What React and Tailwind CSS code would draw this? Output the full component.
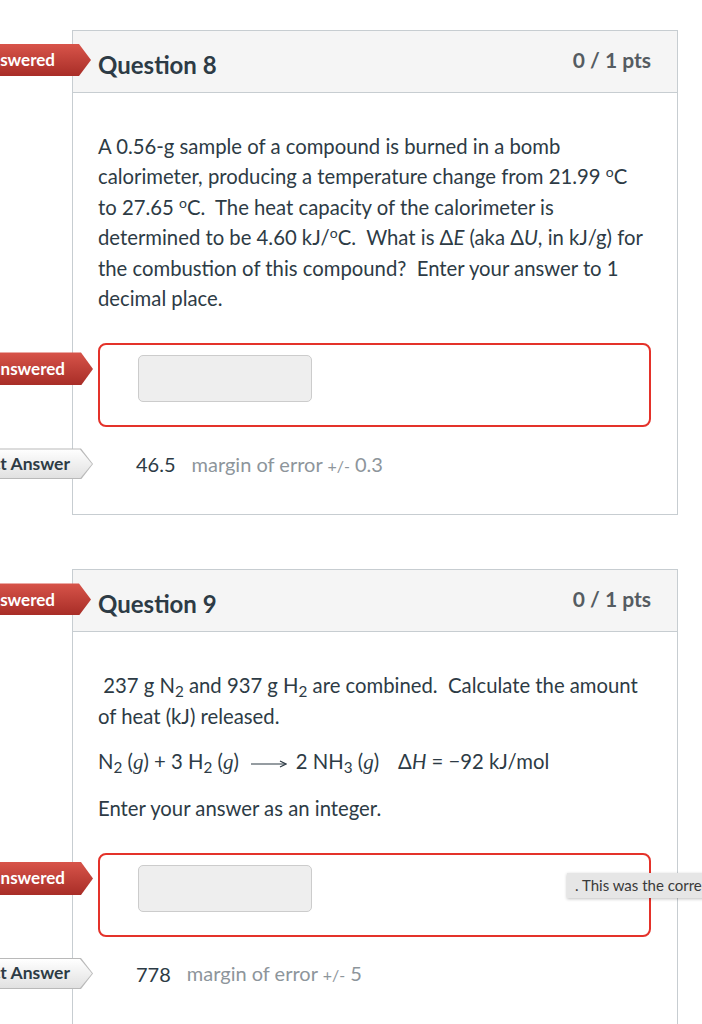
import React from 'react';

const arrowClip = '[clip-path:polygon(0_0,calc(100%_-_12px)_0,100%_50%,calc(100%_-_12px)_100%,0_100%)]';

// Red "Unanswered" flag, left part runs off the page
const RedTab = ({className}) => (
    <div className={`absolute w-[160px] flex items-center justify-end whitespace-nowrap bg-linear-to-b from-[#d8544a] to-[#a82d27] text-white font-bold text-[17px] ${arrowClip} ${className}`}>
        Unanswered
    </div>
);

// Light "Correct Answer" flag with a thin grey outline
const GreyTab = ({className}) => (
    <div className={`absolute w-[160px] bg-[#b9b9b9] ${arrowClip} ${className}`}>
        <div className={`absolute inset-[1px] flex items-center justify-end whitespace-nowrap pr-[22px] bg-linear-to-b from-white to-[#e1e1e1] text-[#2d3b45] font-bold text-[17.5px] ${arrowClip}`}>
            Correct Answer
        </div>
    </div>
);

const Header = ({title}) => (
    <div className="relative h-[62px] flex items-center justify-between pl-[25px] pr-[26px] bg-[#f5f5f5] border-b border-[#c7cdd1]">
        <RedTab className="left-[-142px] top-[13px] h-[32px] pr-[36px]"/>
        <h2 className="text-[24px] font-bold text-[#2d3b45] pt-[6px]">{title}</h2>
        <span className="text-[21px] font-bold text-[#555c62] -mt-[4px]">0 / 1 pts</span>
    </div>
);

const AnswerBox = ({tooltip}) => (
    <div className="relative mt-[30px] pl-[25px] pr-[26px]">
        <RedTab className="left-[-140px] top-[9px] h-[33px] pr-[28px]"/>
        <div className="h-[84px] border-2 border-[#e4322a] rounded-[8px] pl-[38px] pt-[10px]">
            <div className="w-[174px] h-[47px] bg-[#eeeeee] border border-[#cccccc] rounded-[5px]"/>
        </div>
        {tooltip && (
            <div className="absolute left-[494px] top-[20px] h-[25px] flex items-center pl-[8px] pr-3 bg-[#e6e6e6] shadow-[0_1px_3px_rgba(0,0,0,0.25)] text-[15px] text-[#3a3a3a] whitespace-nowrap">
                . This was the correct answer.
            </div>
        )}
    </div>
);

const CorrectRow = ({value, margin}) => (
    <div className="relative mt-[22px] h-[30px] flex items-center pl-[63px]">
        <GreyTab className="left-[-140px] top-[-1px] h-[31px]"/>
        <span className="text-[20px] text-[#2d3b45]">{value}</span>
        <span className="ml-[16px] text-[20px] text-[#8d959b]">
            margin of error <span className="text-[16px]">+/-</span> {margin}
        </span>
    </div>
);

const g = <i className="font-['Liberation_Serif'] text-[21px]">g</i>;
const deg = <sup className="text-[14px]">o</sup>;

const LongArrow = () => (
    <svg className="inline-block ml-[12px] mr-[9px] align-middle" width="36" height="10" viewBox="0 0 36 10">
        <line x1="0" y1="5" x2="34" y2="5" stroke="#2d3b45" strokeWidth="1.2"/>
        <path d="M29 2 L35 5 L29 8" fill="none" stroke="#2d3b45" strokeWidth="1.2"/>
    </svg>
);

export default function App() {
    return (
        <div className="relative w-[702px] h-[1024px] overflow-hidden bg-white font-['Lato',sans-serif] text-[#2d3b45]">
            <div className="pl-[72px] pt-[30px]">
                {/* Question 8 */}
                <div className="relative w-[606px] border border-[#c7cdd1]">
                    <Header title="Question 8"/>
                    <div className="pt-[38px] pb-[35px]">
                        <p className="pl-[25px] pr-[32px] text-[20.3px] leading-[30.4px]">
                            A 0.56-g sample of a compound is burned in a bomb calorimeter, producing a temperature change from 21.99 {deg}C to 27.65 {deg}C.{'\u00a0'} The heat capacity of the calorimeter is determined to be 4.60 kJ/{deg}C.{'\u00a0'} What is Δ<i>E</i> (aka Δ<i>U</i>, in kJ/g) for the combustion of this compound?{'\u00a0'} Enter your answer to 1 decimal place.
                        </p>
                        <AnswerBox/>
                        <CorrectRow value="46.5" margin="0.3"/>
                    </div>
                </div>

                {/* Question 9 */}
                <div className="relative w-[606px] mt-[54px] border border-[#c7cdd1]">
                    <Header title="Question 9"/>
                    <div className="pt-[38px] pb-[80px] text-[20.3px] leading-[30.4px]">
                        <div className="pl-[25px] pr-[26px]">
                            <p>
                                {'\u00a0'}237 g N<sub>2</sub> and 937 g H<sub>2</sub> are combined.{'\u00a0'} Calculate the amount of heat (kJ) released.
                            </p>
                            <p className="mt-[15px]">
                                N<sub>2</sub> ({g}) + 3 H<sub>2</sub> ({g})<LongArrow/>2 NH<sub>3</sub> ({g})
                                <span className="ml-[19px]">Δ<i>H</i> = −92 kJ/mol</span>
                            </p>
                            <p className="mt-[15px]">Enter your answer as an integer.</p>
                        </div>
                        <AnswerBox tooltip/>
                        <CorrectRow value="778" margin="5"/>
                    </div>
                </div>
            </div>
        </div>
    );
}
